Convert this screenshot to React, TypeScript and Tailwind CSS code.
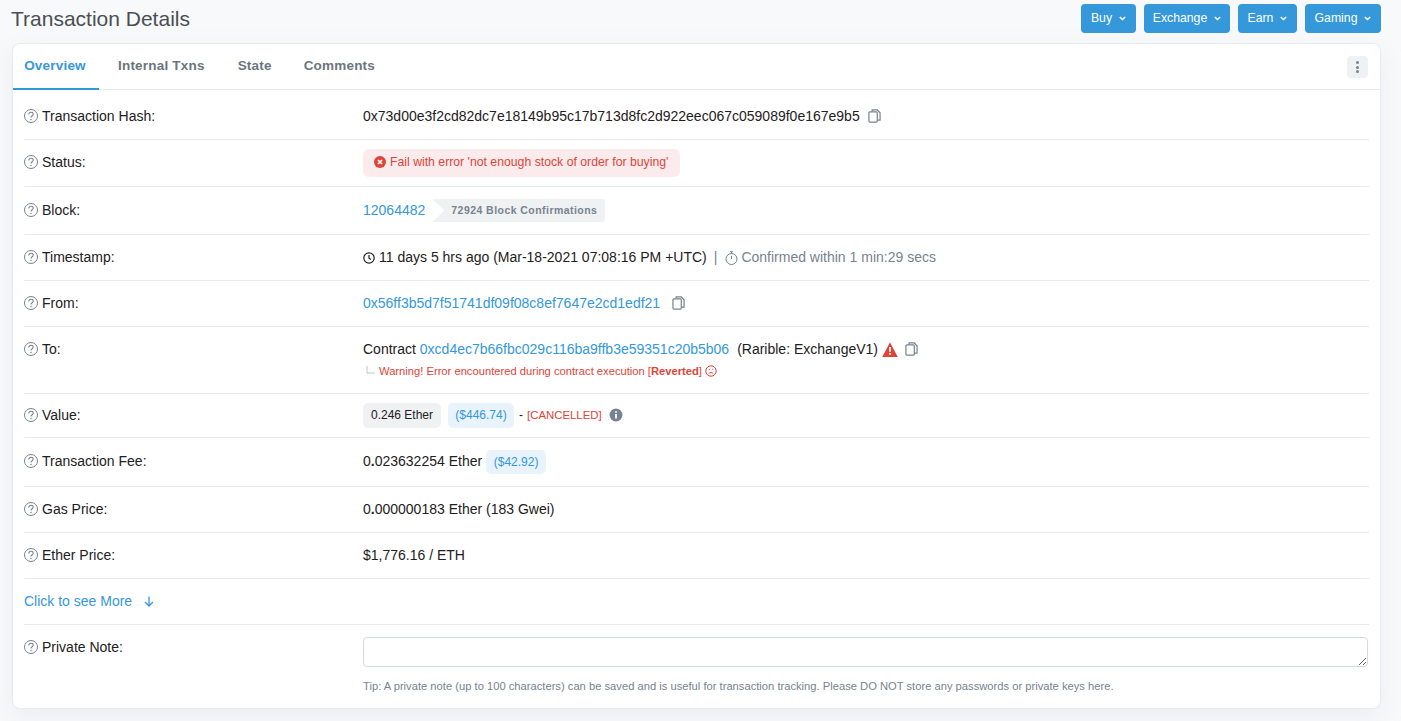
import React from "react";

const Help = () => (
  <svg width="14" height="14" viewBox="0 0 14 14" className="shrink-0 mr-[4px] mb-[1px]" fill="none">
    <circle cx="7" cy="7" r="6.500" stroke="#77838f" strokeWidth="1" />
    <path d="M4.800 5.400C4.800 4.100 5.800 3.300 7 3.300c1.300 0 2.200.8 2.200 1.900 0 1.600-2.200 1.500-2.200 3.300" stroke="#77838f" strokeWidth="1.100" />
    <circle cx="7" cy="10.500" r="0.750" fill="#77838f" />
  </svg>
);

const Copy = () => (
  <svg width="13" height="14" viewBox="0 0 14 15" fill="none" stroke="#77838f" strokeWidth="1.300" className="mb-[1px]">
    <path d="M4.500 3V1h5.500L13 4v8h-3" />
    <rect x="1" y="3" width="9" height="11" rx="1" />
  </svg>
);

const Row = ({ h, label, children, labelClass = "" }: { h: string; label: string; children: React.ReactNode; labelClass?: string }) => (
  <div className={`flex ${h} border-b border-[#e7eaf3]`}>
    <div className={`w-[339px] shrink-0 flex items-center text-[#1e2022] ${labelClass}`}><Help />{label}</div>
    {children}
  </div>
);

const Btn = ({ t, w }: { t: string; w: string }) => (
  <button className={`h-[29px] ${w} bg-[#3498db] rounded-[4px] text-white text-[12.25px] flex items-center justify-center gap-[7px]`}>
    {t}
    <svg width="7" height="5" viewBox="0 0 7 5" fill="none" stroke="white" strokeWidth="1.600"><path d="M.8 1l2.700 2.500L6.200 1" /></svg>
  </button>
);

export default function App() {
  return (
    <div className="h-[721px] overflow-hidden bg-[#f8f9fa] pl-[12px] pr-[20px] font-['Liberation_Sans',Arial,sans-serif] text-[14px] leading-[21px] text-[#1e2022]">
      <div className="h-[43px] flex items-start justify-between">
        <h1 className="text-[21px] leading-[24px] pt-[7px] -ml-[1px] text-[#4a4f55]">Transaction Details</h1>
        <div className="flex gap-[8px] pt-[4px]">
          <Btn t="Buy" w="w-[55px]" /><Btn t="Exchange" w="w-[86px]" /><Btn t="Earn" w="w-[59px]" /><Btn t="Gaming" w="w-[76px]" />
        </div>
      </div>
      <div className="w-[1369px] h-[666px] bg-white rounded-[8px] border border-[#e7eaf3] shadow-[0_8px_24px_rgba(189,197,209,0.2)]">
        <div className="h-[46px] flex items-stretch justify-between border-b border-[#e7eaf3] pr-[12px]">
          <div className="flex font-bold text-[13.500px] text-[#6c757e] tracking-[0.2px] pb-[3px]">
            <div className="w-[86px] h-[46px] -mb-[3px] flex items-center justify-center pb-[2px] pr-[2px] text-[#3498db] border-b-2 border-[#3498db]">Overview</div>
            <div className="ml-[19px] flex items-center">Internal Txns</div>
            <div className="ml-[33px] flex items-center">State</div>
            <div className="ml-[32px] flex items-center">Comments</div>
          </div>
          <div className="flex items-center">
            <div className="w-[21px] h-[22px] bg-[#eff1f3] rounded-[4px] flex flex-col items-center justify-center gap-[1.500px] mt-[1px]">
              <i className="w-[3px] h-[3px] rounded-full bg-[#77838f]" />
              <i className="w-[3px] h-[3px] rounded-full bg-[#77838f]" />
              <i className="w-[3px] h-[3px] rounded-full bg-[#77838f]" />
            </div>
          </div>
        </div>
        <div className="px-[11px]">
          <Row h="h-[50px] pt-[4px]" label="Transaction Hash:">
            <div className="flex items-center gap-[8px]">0x73d00e3f2cd82dc7e18149b95c17b713d8fc2d922eec067c059089f0e167e9b5 <Copy /></div>
          </Row>
          <Row h="h-[47px]" label="Status:" labelClass="mb-[2px]">
            <div className="flex items-center">
              <span className="inline-flex items-center h-[28px] pb-[2px] pl-[11px] pr-[12px] rounded-[6px] bg-[#fcebec] text-[#de4437] text-[12.250px] gap-[4px]">
                <svg width="12" height="12" viewBox="0 0 12 12"><circle cx="6" cy="6" r="6" fill="#de4437" /><path d="M4 4l4 4M8 4l-4 4" stroke="white" strokeWidth="1.600" /></svg>
                Fail with error 'not enough stock of order for buying'
              </span>
            </div>
          </Row>
          <Row h="h-[48px]" label="Block:">
            <div className="flex items-center">
              <a className="text-[#3498db]">12064482</a>
              <span className="ml-[7px] h-[23px] pl-[19px] pr-[8px] bg-[#eff1f3] rounded-r-[3px] text-[#77838f] font-bold text-[10.500px] tracking-[0.45px] flex items-center [clip-path:polygon(0_0,100%_0,100%_100%,0_100%,12px_50%)]">72924 Block Confirmations</span>
            </div>
          </Row>
          <Row h="h-[46px]" label="Timestamp:">
            <div className="flex items-center">
              <svg width="12" height="12" viewBox="0 0 12 12" fill="none" stroke="#1e2022" strokeWidth="1.200" className="mr-[4px]"><circle cx="6" cy="6" r="5.200" /><path d="M6 3v3.200l2 1.200" /></svg>
              11 days 5 hrs ago (Mar-18-2021 07:08:16 PM +UTC)
              <span className="text-[#77838f] ml-[7px] mr-[8px]">|</span>
              <svg width="13" height="14" viewBox="0 0 13 14" fill="none" stroke="#77838f" strokeWidth="1" className="mr-[3px]"><circle cx="6.500" cy="8" r="5.500" /><path d="M5 .7h3M6.500 1v1.500M6.500 5v3" /></svg>
              <span className="text-[#77838f]">Confirmed within 1 min:29 secs</span>
            </div>
          </Row>
          <Row h="h-[46px]" label="From:">
            <div className="flex items-center gap-[12px]"><a className="text-[#3498db]">0x56ff3b5d7f51741df09f08c8ef7647e2cd1edf21</a><Copy /></div>
          </Row>
          <div className="flex h-[67px] pt-[12px] border-b border-[#e7eaf3]">
            <div className="w-[339px] shrink-0 flex items-center self-start h-[21px]"><Help />To:</div>
            <div className="flex-1 min-w-0">
              <div className="flex items-center">
                Contract&nbsp;<a className="text-[#3498db]">0xcd4ec7b66fbc029c116ba9ffb3e59351c20b5b06</a>
                <span className="ml-[8px]">(Rarible: ExchangeV1)</span>
                <svg width="16" height="15" viewBox="0 0 16 15" className="ml-[4px] mb-[1px]"><path d="M8 0.300L15.800 15H.2z" fill="#de4437" /><path d="M8 5v4.800M8 11v1.800" stroke="white" strokeWidth="1.800" /></svg>
                <span className="ml-[7px] flex"><Copy /></span>
              </div>
              <div className="flex items-center text-[11.200px] leading-[14px] mt-[4px] text-[#de4437]">
                <svg width="9" height="8" viewBox="0 0 9 8" fill="none" stroke="#bdc5d1" strokeWidth="1" className="ml-[3px] mr-[4px] mb-[2px]"><path d="M1 0v7h8" /></svg>
                <span>Warning! Error encountered during contract execution [<b className="font-semibold">Reverted</b>]</span>
                <svg width="12" height="12" viewBox="0 0 12 12" fill="none" stroke="#de4437" strokeWidth="1" className="ml-[3px]"><circle cx="6" cy="6" r="5.200" /><path d="M3.800 8.600c1.100-1.400 3.300-1.400 4.400 0M3.800 4.300h1M7.200 4.300h1" /></svg>
              </div>
            </div>
          </div>
          <Row h="h-[44px]" label="Value:">
            <div className="flex items-center text-[12px]">
              <span className="h-[25px] w-[78px] bg-[#eff1f3] rounded-[5px] flex items-center justify-center">0.246 Ether</span>
              <span className="ml-[7px] h-[25px] w-[66px] bg-[#e8f3fb] rounded-[5px] flex items-center justify-center text-[#3498db]">($446.74)</span>
              <span className="ml-[5px] mr-[4px]">-</span>
              <span className="text-[#de4437] text-[11.400px]">[CANCELLED]</span>
              <svg width="14" height="14" viewBox="0 0 14 14" className="ml-[7px] mb-[2px]"><circle cx="7" cy="7" r="6.500" fill="#77838f" /><path d="M7 6v4.500M7 3.200v1.500" stroke="white" strokeWidth="1.800" /></svg>
            </div>
          </Row>
          <Row h="h-[49px]" label="Transaction Fee:" labelClass="mb-[2px]">
            <div className="flex items-center">
              <span className="mb-[2px]">0<b>.</b>023632254 Ether</span>
              <span className="ml-[4px] h-[24px] w-[60px] bg-[#e8f3fb] rounded-[5px] flex items-center justify-center text-[#3498db] text-[12px]">($42.92)</span>
            </div>
          </Row>
          <Row h="h-[46px]" label="Gas Price:"><div className="flex items-center">0<b>.</b>000000183 Ether (183 Gwei)</div></Row>
          <Row h="h-[46px]" label="Ether Price:"><div className="flex items-center">$1,776.16 / ETH</div></Row>
          <div className="h-[46px] flex items-center border-b border-[#e7eaf3] text-[#3498db]">
            Click to see More
            <svg width="10" height="11" viewBox="0 0 10 11" fill="none" stroke="#3498db" strokeWidth="1.300" className="ml-[12px]"><path d="M5 .5v9.500M1 6l4 4 4-4" /></svg>
          </div>
          <div className="flex pt-[12px]">
            <div className="w-[339px] shrink-0 flex items-center self-start h-[21px]"><Help />Private Note:</div>
            <div className="w-[1005px]">
              <textarea className="block w-full h-[30px] rounded-[4px] border border-[#d5dae2] bg-white" />
              <p className="mt-[12px] text-[11.200px] leading-[14px] text-[#77838f]">Tip: A private note (up to 100 characters) can be saved and is useful for transaction tracking. Please DO NOT store any passwords or private keys here.</p>
            </div>
          </div>
        </div>
      </div>
    </div>
  );
}
